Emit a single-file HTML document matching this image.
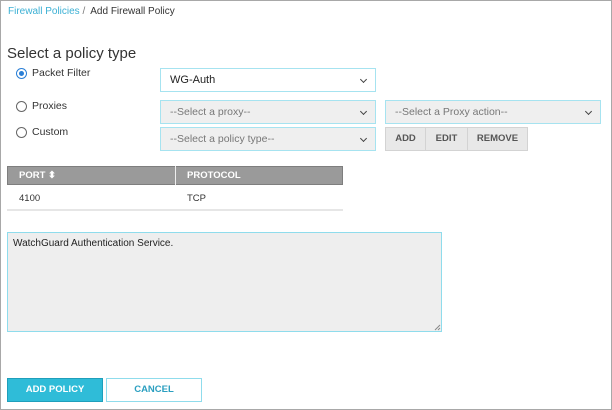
<!DOCTYPE html>
<html><head><style>
*{box-sizing:border-box;margin:0;padding:0}
body{width:612px;height:410px;background:#fff;font-family:"Liberation Sans",sans-serif;position:relative;overflow:hidden}
.frame{position:absolute;left:0;top:0;width:612px;height:410px;border:1px solid #a8a8a8}
.a{position:absolute}
.sel{position:absolute;border:1px solid #a6e3f0;background:#efefef;font-size:10.5px;color:#777;padding-left:9px;line-height:22px}
.sel:after{content:"";position:absolute;right:9px;top:8px;width:4px;height:4px;border-right:1.3px solid #444;border-bottom:1.3px solid #444;transform:rotate(45deg)}
.radio{position:absolute;left:16px;width:11px;height:11px;border:1px solid #666;border-radius:50%;background:#fff}
.lbl{position:absolute;left:32px;font-size:10.5px;color:#333}
.btn{position:absolute;top:127px;height:24px;background:#e8e8e8;border:1px solid #d3d3d3;font-size:9.5px;font-weight:bold;color:#555;text-align:center;line-height:22px}
</style></head><body>
<div class="frame"></div>
<div class="a" style="left:8px;top:6px;font-size:10px;color:#333"><span style="color:#3bb0d4">Firewall Policies</span> <span style="color:#777">/</span>&nbsp; Add Firewall Policy</div>
<div class="a" style="left:7px;top:45px;font-size:15px;color:#333">Select a policy type</div>
<div class="radio" style="top:68px;border-color:#2a7fd6"><div style="position:absolute;left:2px;top:2px;width:5px;height:5px;border-radius:50%;background:#2a7fd6"></div></div>
<div class="lbl" style="top:67px">Packet Filter</div>
<div class="radio" style="top:101px"></div><div class="lbl" style="top:100px">Proxies</div>
<div class="radio" style="top:127px"></div><div class="lbl" style="top:126px">Custom</div>
<div class="sel" style="left:160px;top:68px;width:216px;height:24px;background:#fff;color:#222;font-size:11px">WG-Auth</div>
<div class="sel" style="left:160px;top:100px;width:216px;height:24px">--Select a proxy--</div>
<div class="sel" style="left:160px;top:127px;width:216px;height:24px">--Select a policy type--</div>
<div class="sel" style="left:385px;top:100px;width:216px;height:24px">--Select a Proxy action--</div>
<div class="btn" style="left:385px;width:41px">ADD</div>
<div class="btn" style="left:425px;width:43px">EDIT</div>
<div class="btn" style="left:467px;width:61px">REMOVE</div>
<div class="a" style="left:7px;top:166px;width:336px;height:19px;background:#9a9a9a;border:1px solid #7e7e7e"></div>
<div class="a" style="left:175px;top:166px;width:1px;height:19px;background:#eee"></div>
<div class="a" style="left:19px;top:170px;font-size:9.5px;font-weight:bold;color:#fff">PORT &#x2B0D;</div>
<div class="a" style="left:187px;top:170px;font-size:9.5px;font-weight:bold;color:#fff">PROTOCOL</div>
<div class="a" style="left:19px;top:193px;font-size:9.5px;color:#333">4100</div>
<div class="a" style="left:187px;top:193px;font-size:9.5px;color:#333">TCP</div>
<div class="a" style="left:7px;top:209px;width:336px;height:2px;background:#e6e6e6"></div>
<div class="a" style="left:7px;top:232px;width:435px;height:100px;background:#eeeeee;border:1px solid #8fdcec;font-size:10px;color:#222;padding:5px 5px">WatchGuard Authentication Service.</div>
<svg class="a" style="left:434px;top:324px" width="7" height="7"><path d="M1 6L6 1M4 6L6 4" stroke="#888" stroke-width="1"/></svg>
<div class="a" style="left:7px;top:378px;width:96px;height:24px;background:#2fbcd8;border:1px solid #1f9fbb;color:#fff;font-size:9.5px;font-weight:bold;text-align:center;line-height:22px">ADD POLICY</div>
<div class="a" style="left:106px;top:378px;width:96px;height:24px;background:#fff;border:1px solid #8fdcec;color:#2b9fc0;font-size:9.5px;font-weight:bold;text-align:center;line-height:22px">CANCEL</div>
</body></html>
